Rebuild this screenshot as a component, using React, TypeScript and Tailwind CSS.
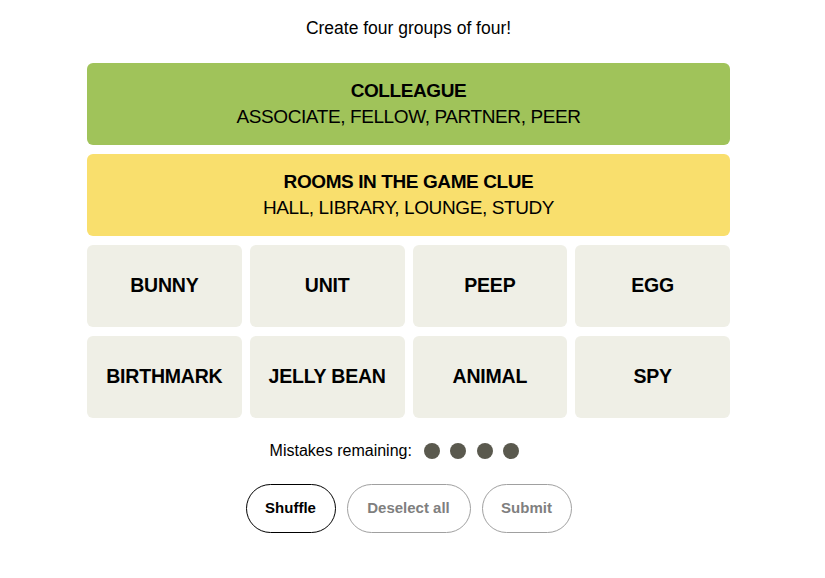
const font = { fontFamily: '"Liberation Sans", Arial, sans-serif' };

const solved = [
  { title: "COLLEAGUE", words: "ASSOCIATE, FELLOW, PARTNER, PEER", color: "bg-[#a0c35a]" },
  { title: "ROOMS IN THE GAME CLUE", words: "HALL, LIBRARY, LOUNGE, STUDY", color: "bg-[#f9df6d]" },
];

const tiles = ["BUNNY", "UNIT", "PEEP", "EGG", "BIRTHMARK", "JELLY BEAN", "ANIMAL", "SPY"];

export default function App() {
  return (
    <div className="flex min-h-[578px] w-full flex-col items-center bg-white pr-[8px] text-black" style={font}>
      <p className="mt-[17px] text-[17.5px] leading-[22px]">Create four groups of four!</p>

      <div className="mt-[24px] grid w-[643px] grid-cols-4 gap-x-[8px] gap-y-[9px]">
        {solved.map((g) => (
          <div
            key={g.title}
            className={`col-span-4 flex h-[82px] flex-col items-center justify-center rounded-[6px] ${g.color}`}
          >
            <div className="text-[19px] font-bold leading-[26px] tracking-[-0.4px]">{g.title}</div>
            <div className="text-[19px] leading-[26px] tracking-[-0.4px]">{g.words}</div>
          </div>
        ))}
        {tiles.map((t) => (
          <div
            key={t}
            className="flex h-[82px] items-center justify-center rounded-[6px] bg-[#efefe6] text-[19.5px] font-bold tracking-[-0.2px]"
          >
            {t}
          </div>
        ))}
      </div>

      <div className="mt-[21px] flex items-center gap-[11px] pr-[28px] text-[16px]">
        <span className="mr-[1px]">Mistakes remaining:</span>
        <div className="flex gap-[10.5px]">
          {[0, 1, 2, 3].map((i) => (
            <span key={i} className="h-[16px] w-[16px] rounded-full bg-[#5a594e]" />
          ))}
        </div>
      </div>

      <div className="mt-[21px] flex gap-[11px]">
        <button className="h-[49px] w-[90px] rounded-full border border-black text-[15px] font-semibold">
          Shuffle
        </button>
        <button className="h-[49px] w-[124px] rounded-full border border-[#a0a0a0] text-[15px] font-semibold text-[#7f7f7f]">
          Deselect all
        </button>
        <button className="h-[49px] w-[90px] rounded-full border border-[#a0a0a0] text-[15px] font-semibold text-[#7f7f7f]">
          Submit
        </button>
      </div>
    </div>
  );
}
